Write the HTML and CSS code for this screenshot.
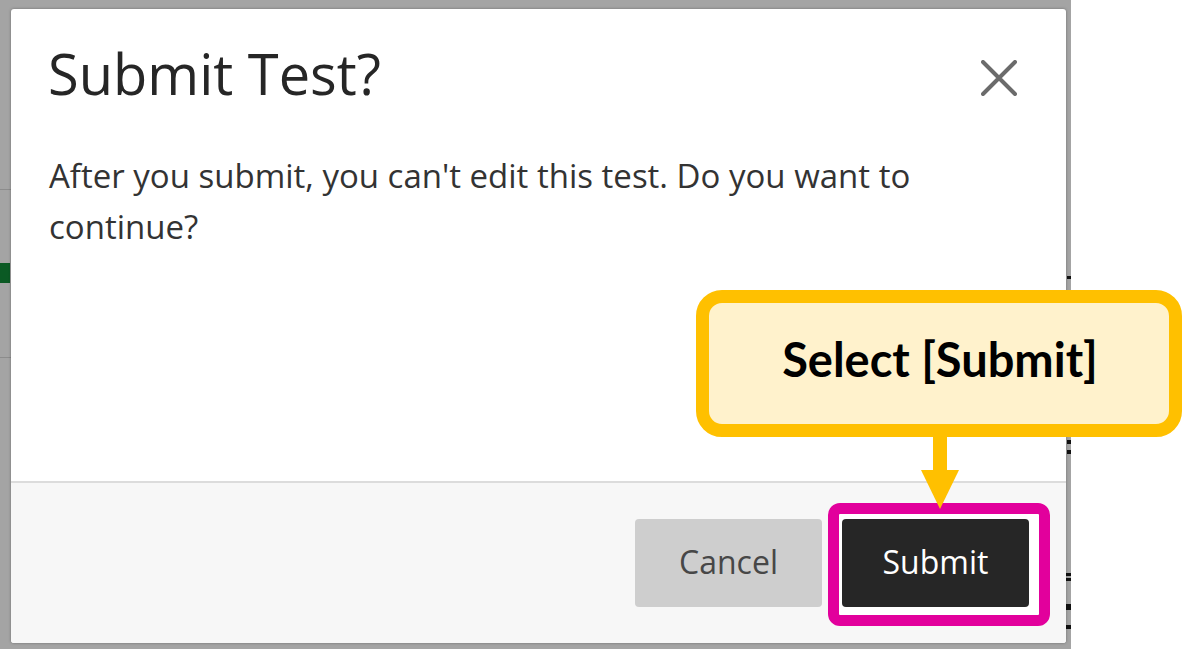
FILE: index.html
```html
<!DOCTYPE html>
<html lang="en">
<head>
  <meta charset="UTF-8" />
  <meta name="viewport" content="width=device-width, initial-scale=1.0"/>
  <link rel="stylesheet" href="styles.css">
</head>
<body>
  <div class="stage">
    <div class="backdrop">
      <div class="modal" role="dialog" aria-labelledby="modalTitle">
        <div class="modal-header">
          <h1 id="modalTitle" class="modal-title">Submit Test?</h1>
          <button class="close-button" aria-label="Close">
            <svg width="36" height="36" viewBox="0 0 36 36">
              <path d="M2 2 L34 34 M34 2 L2 34" stroke="#6b6b6b" stroke-width="4" stroke-linecap="round" fill="none"/>
            </svg>
          </button>
        </div>
        <div class="modal-body">
          <p>After you submit, you can't edit this test. Do you want to continue?</p>
        </div>
        <div class="modal-footer">
          <button class="btn btn-cancel">Cancel</button>
          <span class="highlight">
            <button class="btn btn-submit">Submit</button>
          </span>
        </div>
      </div>
    </div>
    <div class="page-edge"></div>
  </div>

  <!-- annotation over the screenshot -->
  <div class="callout">Select [Submit]</div>
  <svg class="callout-arrow" width="38" height="72" viewBox="0 0 38 72">
    <rect x="12" y="0" width="14" height="34" fill="#ffc000"/>
    <polygon points="0,33 38,33 19,72" fill="#ffc000"/>
  </svg>
</body>
</html>
```

FILE: styles.css
```css
body {
  margin: 0;
  width: 1182px;
  height: 649px;
  overflow: hidden;
  background: #fff;
  font-family: 'Open Sans', 'Noto Sans', sans-serif;
  position: relative;
}
.stage {
  display: flex;
  height: 649px;
}
.backdrop {
  width: 1071px;
  height: 649px;
  box-sizing: border-box;
  padding: 9px 5px 6px 11px;
  background:
    linear-gradient(#8c8c8c, #8c8c8c) 0 189px / 11px 1px no-repeat,
    linear-gradient(#8c8c8c, #8c8c8c) 0 357px / 11px 1px no-repeat,
    linear-gradient(#0b5a24, #0b5a24) 0 263px / 10px 20px no-repeat,
    linear-gradient(#111, #111) right 0 top 276px / 4px 3px no-repeat,
    linear-gradient(#111, #111) right 0 top 440px / 4px 4px no-repeat,
    linear-gradient(#111, #111) right 0 top 450px / 4px 4px no-repeat,
    linear-gradient(#111, #111) right 0 top 573px / 5px 3px no-repeat,
    linear-gradient(#111, #111) right 0 top 578px / 5px 3px no-repeat,
    linear-gradient(#111, #111) right 0 top 604px / 5px 6px no-repeat,
    linear-gradient(#111, #111) right 0 top 625px / 5px 4px no-repeat,
    #a4a4a4;
}
.page-edge {
  flex: 1;
  background: #fff;
}
.modal {
  height: 100%;
  background: #fff;
  border-radius: 3px;
  box-shadow: 0 0 3px rgba(0,0,0,0.35);
  display: flex;
  flex-direction: column;
  overflow: hidden;
}
.modal-header {
  display: flex;
  justify-content: space-between;
  align-items: flex-start;
  padding: 31px 49px 0 37px;
}
.modal-title {
  margin: 0;
  font-size: 56px;
  font-weight: 400;
  line-height: 1.2;
  color: #262626;
}
.close-button {
  background: none;
  border: none;
  padding: 0;
  margin-top: 20px;
  width: 36px;
  height: 36px;
  cursor: pointer;
}
.close-button svg { display: block; }
.modal-body {
  flex: 1;
  padding: 43px 110px 0 38px;
}
.modal-body p {
  margin: 0;
  font-size: 33px;
  line-height: 51px;
  color: #333;
}
.modal-footer {
  height: 160px;
  border-top: 2px solid #dcdcdc;
  background: #f7f7f7;
  display: flex;
  justify-content: flex-end;
  align-items: center;
  gap: 6px;
  padding-right: 16px;
}
.btn {
  width: 187px;
  height: 88px;
  border: none;
  border-radius: 4px;
  font-family: 'Open Sans', 'Noto Sans', sans-serif;
  font-size: 32px;
  padding: 0 0 4px;
  cursor: pointer;
}
.btn-cancel {
  background: #cecece;
  color: #474747;
}
.btn-submit {
  display: block;
  background: #262626;
  color: #fff;
}
.highlight {
  display: block;
  border: 11px solid #e2009c;
  border-radius: 12px;
  background: #fff;
  padding: 5px 10px 8px 3px;
  margin-top: 3px;
}
/* annotation */
.callout {
  position: absolute;
  left: 696px;
  top: 290px;
  width: 486px;
  height: 147px;
  box-sizing: border-box;
  border: 13px solid #ffc000;
  border-radius: 26px;
  background: #fff2cc;
  display: flex;
  align-items: center;
  justify-content: center;
  padding: 0 0 10px 2px;
  font-family: 'Lato', 'Liberation Sans', sans-serif;
  font-weight: 700;
  font-size: 47px;
  color: #000;
}
.callout-arrow {
  position: absolute;
  left: 921px;
  top: 437px;
}
```
